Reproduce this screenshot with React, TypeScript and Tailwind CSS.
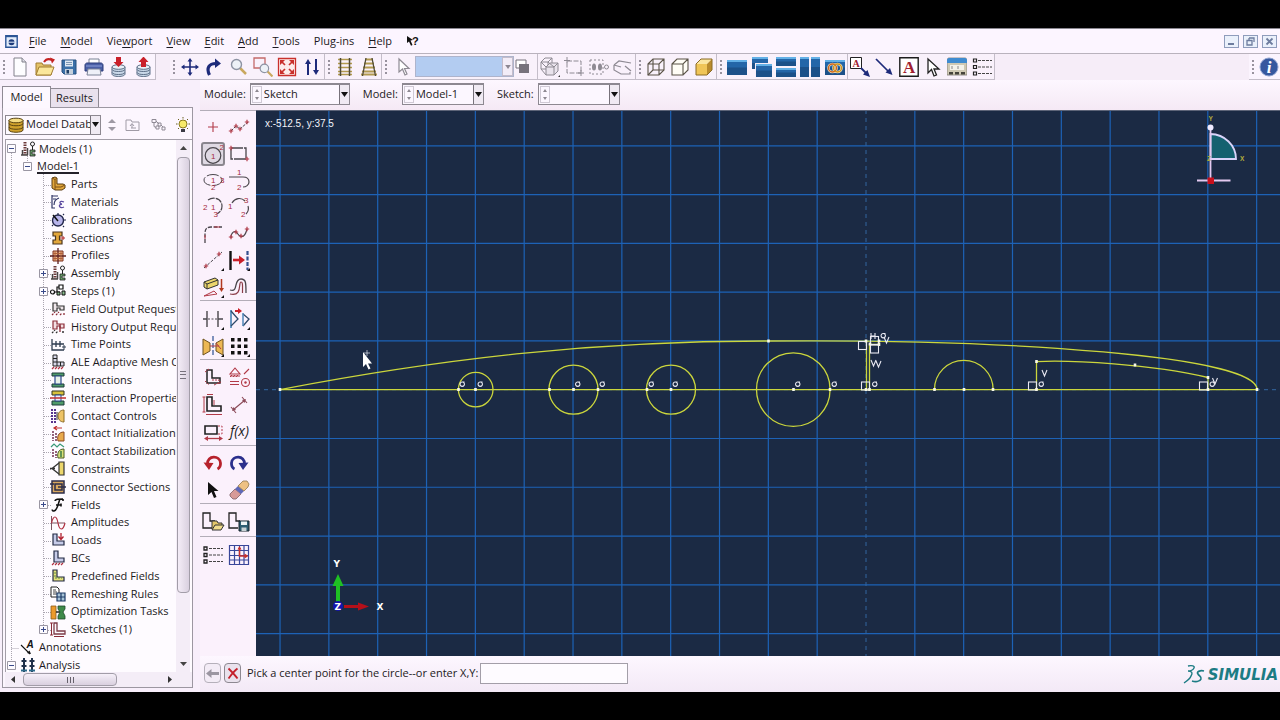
import React from "react";

type Kids = { children?: React.ReactNode };

const RED = "#b23a48";
const NAVY = "#1d2a7a";

function I20({ children }: Kids) {
  return (
    <svg viewBox="0 0 20 20" className="size-5 shrink-0" fill="none" aria-hidden="true">
      {children}
    </svg>
  );
}
function I24({ children }: Kids) {
  return (
    <svg viewBox="0 0 24 24" className="size-6 shrink-0" fill="none" aria-hidden="true">
      {children}
    </svg>
  );
}
function I16({ children }: Kids) {
  return (
    <svg viewBox="0 0 16 16" className="size-4 shrink-0" fill="none" aria-hidden="true">
      {children}
    </svg>
  );
}

/* ---------- main toolbar icons ---------- */

const disk = (
  <>
    <path d="M3 3h14v14H5l-2-2z" fill="#3b6fa8" stroke="#26507f" />
    <path d="M6 3.500h8v6H6z" fill="#dfe8f2" />
    <path d="M7 5.500h6M7 7.500h6" stroke="#7d97b5" />
    <path d="M6 12h8v5H6z" fill="#c5d0dc" />
    <path d="M7.500 13h2.500v3.500H7.500z" fill="#1f3e66" />
  </>
);
const drum = (
  <>
    <path d="M4 10v7c0 1.400 2.700 2.500 6.500 2.500S17 18.400 17 17v-7z" fill="#c9d8e8" stroke="#5d6f87" />
    <path d="M4 12.500c1 1.500 3 2 6.500 2s5.500-.6 6.500-2M4 15.500c1 1.500 3 2 6.500 2s5.500-.6 6.500-2" stroke="#5d6f87" />
    <ellipse cx="10.500" cy="10" rx="6.500" ry="2.300" fill="#eaf1f8" stroke="#5d6f87" />
  </>
);
const glass = (
  <>
    <path d="M11 11l6 6" stroke="#c9a85f" strokeWidth="2.500" />
    <circle cx="7.500" cy="7.500" r="5" fill="#edf1f7" stroke="#8d93a3" strokeWidth="1.400" />
  </>
);
const pane = (x: number, y: number, w: number, h: number) => (
  <>
    <rect x={x} y={y} width={w} height={h} fill="#2466a8" />
    <rect x={x} y={y + h / 2} width={w} height={h / 2} fill="#15406f" opacity="0.55" />
    <rect x={x} y={y} width={w} height="2" fill="#63b0e6" />
  </>
);
const cubeEdges = (
  <path d="M2 7l5-5h11v11l-5 5H2zM2 7h11l5-5M13 7v11" stroke="#5a5347" strokeWidth="1.100" />
);

const fileTools: [string, React.ReactNode][] = [
  ["New", <I20><path d="M4 1h8l4 4v14H4z" fill="#fdfdff" stroke="#82818c" /><path d="M12 1v4h4" fill="#dedee6" stroke="#82818c" /></I20>],
  ["Open", <I20><path d="M1 18V6h6l1 2h8v10z" fill="#e3c168" stroke="#a17c31" /><path d="M1 18l3-8h15l-3 8z" fill="#fbe79c" stroke="#a17c31" /><path d="M9 5c2-3 5-3.500 8-2" stroke="#c42222" strokeWidth="2" /><path d="M15 .5l5 2-3 4z" fill="#c42222" /></I20>],
  ["Save", <I20>{disk}</I20>],
  ["Print", <I20><path d="M5 2h10v5H5z" fill="#fff" stroke="#7b8296" /><path d="M1 8c0-1 1-2 2-2h14c1 0 2 1 2 2v6H1z" fill="#4a5fa6" stroke="#2c3c7a" /><path d="M2 9h16" stroke="#8ea0da" /><path d="M4 12h12l1 6H3z" fill="#eef0f8" stroke="#7b8296" /></I20>],
  ["Import", <I20>{drum}<path d="M8 0h5v5h2.500l-5 5-5-5H8z" fill="#c9202a" /></I20>],
  ["Export", <I20>{drum}<path d="M8 10h5V5h2.500l-5-5.500-5 5.500H8z" fill="#c9202a" /></I20>],
];

const viewTools: [string, React.ReactNode][] = [
  ["Pan", <I20><path d="M10 3v14M3 10h14" stroke={NAVY} strokeWidth="1.600" /><path d="M10 1l2.500 3.500h-5zM10 19l2.500-3.500h-5zM1 10l3.500-2.500v5zM19 10l-3.500-2.500v5z" fill={NAVY} /></I20>],
  ["Rotate", <I20><path d="M5.500 18C2 11 5 6.500 12 6.500" stroke={NAVY} strokeWidth="3.200" /><path d="M11 1.500l6 5-6 4.500z" fill={NAVY} /></I20>],
  ["Zoom", <I20>{glass}</I20>],
  ["Box zoom", <I20><path d="M1 1h11v10H1z" stroke="#c46a6a" strokeWidth="1.300" /><g transform="translate(5 5) scale(.85)">{glass}</g></I20>],
  ["Fit view", <I20><path d="M1.500 1.500h17v17h-17z" fill="#fdeceb" stroke="#c9302c" strokeWidth="1.300" /><path d="M4 4l4 4M16 4l-4 4M4 16l4-4M16 16l-4-4" stroke="#c9302c" strokeWidth="1.700" /><path d="M3 3h5L3 8zM17 3v5l-5-5zM3 17v-5l5 5zM17 17h-5l5-5z" fill="#c9302c" /></I20>],
  ["Cycle views", <I20><path d="M6 5v13M14 2v13" stroke={NAVY} strokeWidth="2" /><path d="M6 2l3 5H3zM14 18l3-5h-6z" fill={NAVY} /></I20>],
];

const projTools: [string, React.ReactNode][] = [
  ["Parallel", <I20><path d="M3 2.500h14M3 6.500h14M3 10.500h14M3 14.500h14M3 17.500h14" stroke="#b29a4e" strokeWidth="1.600" /><path d="M5.500 1v18M14.500 1v18" stroke="#4e4935" strokeWidth="1.500" /></I20>],
  ["Perspective", <I20><path d="M6 2.500h8M5 6.500h10M4 10.500h12M3 14.500h14M2 17.500h16" stroke="#b29a4e" strokeWidth="1.800" /><path d="M7 1L3.500 19M13 1l3.500 18" stroke="#4e4935" strokeWidth="1.300" /></I20>],
];

const GR = "#8e8a93";
const selTools: [string, React.ReactNode][] = [
  ["Select from all entities", <I20><path d="M1 5l4-4h7v7l-4 4H1zM1 5h7l4-4M8 5v7" stroke={GR} /><path d="M6 10l4-4h8v8l-4 4H6z" fill="#e9e3ec" stroke={GR} /><path d="M6 10h8l4-4M14 10v8M1 5l5 5M8 5l6 5M1 12l5 6" stroke={GR} /><path d="M18 20h2v-2z" fill="#333" /></I20>],
  ["Drag shape", <I20><path d="M3 4h14v12H3z" stroke={GR} strokeDasharray="5 1.500" /><path d="M3 0v6M0 3.500h6M17 13v6M14 16h6" stroke={GR} /></I20>],
  ["Selection scope", <I20><path d="M1 3h13v14H1z" stroke={GR} strokeDasharray="2 2" /><ellipse cx="5" cy="10" rx="2" ry="3.500" fill={GR} /><ellipse cx="11" cy="10" rx="2" ry="3.500" fill={GR} /><circle cx="17.500" cy="10" r="2" stroke={GR} /></I20>],
  ["Element edge", <I20><path d="M1 8l5-4 12 2M1 8v5l7 4h9v-2M1 8l7 2M12 9l6 5" stroke={GR} strokeWidth="1.200" /></I20>],
];

const renderTools: [string, React.ReactNode][] = [
  ["Wireframe", <I20>{cubeEdges}<path d="M7 2v11h11M7 13l-5 5" stroke="#5a5347" strokeWidth="1.100" /></I20>],
  ["Hidden", <I20><path d="M2 7l5-5h11v11l-5 5H2z" fill="#fffdf6" />{cubeEdges}</I20>],
  ["Shaded", <I20><path d="M2 7h11v11H2z" fill="#f0c557" /><path d="M2 7l5-5h11l-5 5z" fill="#fbe6a0" /><path d="M13 7l5-5v11l-5 5z" fill="#b98b2c" /><path d="M2 7l5-5h11v11l-5 5H2z" stroke="#8a6a25" /></I20>],
];

const vpTools: [string, React.ReactNode][] = [
  ["Create viewport", <I20>{pane(0, 3, 20, 15)}</I20>],
  ["Cascade", <I20>{pane(0, 0, 16, 12)}<path d="M3 6h17v14H3z" fill="#f6edf8" />{pane(4, 7, 16, 13)}</I20>],
  ["Tile horizontally", <I20>{pane(0, 0, 20, 9)}{pane(0, 11, 20, 9)}</I20>],
  ["Tile vertically", <I20>{pane(0, 0, 9, 20)}{pane(11, 0, 9, 20)}</I20>],
  ["Link viewports", <I20>{pane(0, 3, 20, 15)}<circle cx="7.500" cy="11" r="4" stroke="#f0e3c0" strokeWidth="2.600" /><circle cx="12.500" cy="11" r="4" stroke="#f0e3c0" strokeWidth="2.600" /><circle cx="7.500" cy="11" r="4" stroke="#d0641c" strokeWidth="1.400" /><circle cx="12.500" cy="11" r="4" stroke="#d0941c" strokeWidth="1.400" /></I20>],
];

const noteTools: [string, React.ReactNode][] = [
  ["Text arrow", <I20><path d="M.5.5h11v11H.5z" fill="#fff" stroke="#222" /><text x="2.500" y="9.500" fontSize="10" fontWeight="700" fill="#a02030" fontFamily="Liberation Serif, serif">A</text><path d="M11 11l6 6" stroke={NAVY} strokeWidth="1.800" /><path d="M20 20l-7-2.500 4.500-4.500z" fill={NAVY} /></I20>],
  ["Arrow", <I20><path d="M2 2l12 12" stroke={NAVY} strokeWidth="1.700" /><path d="M18.500 18l-7-2.500 4.500-4.500z" fill={NAVY} /></I20>],
  ["Text", <I20><path d="M.8.8h18.400v18.400H.8z" fill="#fff" stroke="#1c1c1c" strokeWidth="1.400" /><text x="4" y="16" fontSize="17" fontWeight="700" fill="#a02030" fontFamily="Liberation Serif, serif">A</text></I20>],
  ["Select annotation", <I20><path d="M5 2v14l3.500-3.500L11 19l2.500-1-2.500-6h5z" fill="#fff" stroke="#222" strokeWidth="1.300" /></I20>],
  ["Annotation manager", <I20><path d="M0 3c0-1 1-2 2-2h16c1 0 2 1 2 2v15H0z" fill="#cfc9b4" stroke="#7d7c74" strokeWidth=".8" /><path d="M0 3c0-1 1-2 2-2h16c1 0 2 1 2 2v3H0z" fill="#3f8bd0" /><path d="M3 8h14v5H3z" fill="#f4f2ea" /><path d="M5 9v3M11 9v3" stroke="#888" /><path d="M2 15h4v2.500H2zM8 15h4v2.500H8zM14 15h4v2.500h-4z" fill="#45433b" /></I20>],
  ["Options", <I20><path d="M1.500 2h3v3h-3zM1.500 8.500h3v3h-3zM1.500 15h3v3h-3z" stroke="#222" strokeWidth="1.200" /><path d="M6 3.500h14M6 10h14M6 16.500h14" stroke="#444" strokeWidth="1.200" strokeDasharray="3 1" /></I20>],
];

/* ---------- sketch toolbox icons ---------- */

const plus = (x: number, y: number, r = 2.2) => (
  <path d={`M${x - r} ${y}h${2 * r}M${x} ${y - r}v${2 * r}`} stroke={RED} strokeWidth="1.200" />
);
const digit = (x: number, y: number, d: string) => (
  <text x={x} y={y} fontSize="8" fill="#a52a3c" fontFamily="Liberation Sans, sans-serif">{d}</text>
);
const corner = <path d="M23 20v3h-3z" fill="#111" />;
const G = "#4a464c";

type Tool = [string, React.ReactNode];
const box1: Tool[] = [
  ["Isolated point", <I24><path d="M12 7v10M7 12h10" stroke={RED} strokeWidth="1.100" /></I24>],
  ["Connected lines", <I24><path d="M4 16l5-5 4 3 8-7" stroke={G} strokeDasharray="3 1" />{plus(4, 16)}{plus(9, 11)}{plus(13, 14)}{plus(20, 7)}</I24>],
  ["Circle", <I24><circle cx="12" cy="13.500" r="7.800" stroke={G} strokeWidth="1.200" />{digit(10, 16.5, "1")}{digit(18.5, 8, "2")}</I24>],
  ["Rectangle", <I24><path d="M4 6h15v11H4z" stroke={G} strokeWidth="1.300" strokeDasharray="12 1" />{plus(4, 6)}{plus(20, 17)}</I24>],
  ["Ellipse", <I24><ellipse cx="12" cy="12" rx="9" ry="5.500" stroke={G} strokeDasharray="12 2" />{digit(10, 14.5, "1")}{digit(10, 21.5, "2")}{digit(19, 14.5, "3")}</I24>],
  ["Tangent arc", <I24><path d="M2 9h14c4 0 6 2 6 5s-3 5-6 5" stroke={G} strokeWidth="1.200" />{digit(10, 7, "1")}{digit(10, 22, "2")}</I24>],
  ["Center arc", <I24><path d="M7 5c6-4 14-1 14 6 0 4-2 6-5 8" stroke={G} strokeWidth="1.200" strokeDasharray="7 1" />{digit(2, 15, "2")}{digit(10, 15, "1")}{digit(12.5, 22, "3")}</I24>],
  ["Three point arc", <I24><path d="M5 8c3-5 9-6 13-2M21 11c1 3 0 6-2 8" stroke={G} strokeWidth="1.200" />{digit(1, 14, "1")}{digit(17, 8, "3")}{digit(14, 22, "2")}</I24>],
  ["Fillet", <I24><path d="M4 21V11c0-4 2-6 6-6h11" stroke={G} strokeWidth="1.300" strokeDasharray="4 1.500" /><path d="M13 5h6M4 13v4" stroke={RED} /></I24>],
  ["Spline", <I24><path d="M4 16c0-6 4-8 6-5s7 8 10-4" stroke={G} strokeWidth="1.200" />{plus(4, 15)}{plus(9, 10)}{plus(14, 14)}{plus(20, 7)}</I24>],
  ["Construction line", <I24><path d="M3 20L21 4" stroke={G} strokeDasharray="3 1.500" />{plus(5, 18)}{plus(18, 6)}{corner}</I24>],
  ["Project edges", <I24><path d="M3.500 3v19" stroke="#111" strokeWidth="2.400" /><path d="M6 12h7" stroke="#c9202a" strokeWidth="2.600" /><path d="M12 7.500l6 4.500-6 4.500z" fill="#c9202a" /><path d="M20.500 3v19" stroke="#35508f" strokeWidth="2.200" strokeDasharray="4 1.500" />{corner}</I24>],
  ["Offset", <I24><path d="M3 7l11-4 3 2v5L6 14l-3-2z" fill="#ecd66c" stroke="#333" /><path d="M3 7l3 2 11-4M6 9v5" stroke="#333" /><path d="M3 21l10-5 3 3z" stroke={RED} /><path d="M20.500 4v10" stroke="#b23a20" strokeWidth="1.500" /><path d="M18 13h5l-2.500 4z" fill="#b23a20" />{corner}</I24>],
  ["Offset curves", <I24><path d="M3 15c9 3 3-11 11-11 5 0 5 4 5 14" stroke={G} strokeWidth="1.300" /><path d="M3 19c13 3 8-12 11-12 2 0 1.500 4 1.500 11" stroke="#8b3c48" strokeWidth="1.200" /></I24>],
];
const box2: Tool[] = [
  ["Trim", <I24><path d="M6 4v16M17 4v16M2 12h4M17 12h5" stroke={G} strokeWidth="1.400" /><path d="M7 12h10" stroke={G} strokeDasharray="2 1.500" />{corner}</I24>],
  ["Extend", <I24><path d="M4 3v18" stroke="#4f86b8" strokeWidth="1.700" /><path d="M4 4l7 8-7 7M16 7l6 5-6 7" stroke="#2f4a6a" strokeWidth="1.300" /><path d="M16 6v13" stroke="#4f86b8" strokeWidth="1.500" /><path d="M8 4h4" stroke="#c9202a" strokeWidth="2" /><path d="M11 1l4 3-4 3z" fill="#c9202a" />{corner}</I24>],
  ["Mirror", <I24><path d="M2 5l7 4v8l-7 4zM22 5l-7 4v8l7 4z" fill="#edb854" stroke="#6d5220" /><path d="M12 2v20" stroke="#3a5c9a" strokeWidth="1.300" strokeDasharray="5 2" /><path d="M9 12h9M15 9l5 6" stroke={RED} />{corner}</I24>],
  ["Pattern", <I24><path d="M4 4h3.500v3.500H4zM10.500 4H14v3.500h-3.500zM17 4h3.500v3.500H17zM4 10.500h3.500V14H4zM10.500 10.500H14V14h-3.500zM17 10.500h3.500V14H17zM4 17h3.500v3.500H4zM10.500 17H14v3.500h-3.500zM17 17h3.500v3.500H17z" fill="#111" />{corner}</I24>],
];
const box3: Tool[] = [
  ["Auto-constrain", <I24><path d="M6 4h5v8h8v5H6z" stroke="#222" strokeWidth="1.500" /><path d="M11 14h7v5M4 6l4-3M13 19l7-3M4 15l4 4" stroke={RED} strokeDasharray="2 1" /></I24>],
  ["Add constraint", <I24><path d="M8 2l5 6H3zM3 10h10M3 15.500h9M3 18.500h9M17 8l5-5" stroke={RED} strokeWidth="1.100" /><path d="M3 11l2-2M6 11l2-2M9 11l2-2" stroke={RED} /><circle cx="18.500" cy="16.500" r="4" stroke={RED} strokeWidth="1.100" /><circle cx="18.500" cy="16.500" r="1.200" fill={RED} /></I24>],
  ["Auto-dimension", <I24><path d="M6 4h5v9h9v5H6z" stroke="#222" strokeWidth="1.600" /><path d="M3 4v15M5 21.500h16M6 1.500h6M13 7v5M1.500 4h3M1.500 19h3" stroke={RED} /></I24>],
  ["Add dimension", <I24><path d="M6 17L18 7M4 14l5 6M15 4l5 6" stroke="#8b4a58" strokeWidth="1.100" /><path d="M5 18l4-1-2.500-3zM19 6l-4 1 2.500 3z" fill="#8b4a58" /></I24>],
  ["Edit dimension", <I24><path d="M4 6h12v8H4z" stroke="#222" strokeWidth="1.600" /><path d="M17 6h4v8h-4" stroke={RED} strokeDasharray="2 1.500" /><path d="M6 18.500h13" stroke={RED} strokeWidth="1.300" /><path d="M3 18.500l4-2.500v5zM22 18.500L18 16v5z" fill={RED} /></I24>],
  ["Parameter manager", <I24><text x="12.500" y="16" textAnchor="middle" fontSize="14" fontStyle="italic" fill="#1c1c1c" fontFamily="Open Sans, sans-serif">f(x)</text></I24>],
];
const box4: Tool[] = [
  ["Undo", <I24><path d="M6.500 13C6 4 19 4 19.500 12c.2 3-1 5-3 6" stroke="#b7222c" strokeWidth="2.800" /><path d="M2.500 11.500l10 .5-4.500 7z" fill="#b7222c" /></I24>],
  ["Redo", <I24><path d="M17.500 13C18 4 5 4 4.500 12c-.2 3 1 5 3 6" stroke="#2b2f8c" strokeWidth="2.800" /><path d="M21.500 11.500l-10 .5 4.500 7z" fill="#2b2f8c" /></I24>],
  ["Select", <I24><path d="M7 4v13l3.500-3 2.500 6 2.500-1-2.500-6h4.500z" fill="#111" /></I24>],
  ["Delete", <I24><path d="M3 16l5-5 6 5-5 5H6l-3-3z" fill="#d79a98" stroke="#7d5f66" strokeWidth=".8" /><path d="M8 11l3-3 6 5-3 3z" fill="#5f68b8" /><path d="M11 8l5-5h4l2 3-1 3-4 4z" fill="#eec184" stroke="#8f7a50" strokeWidth=".8" /></I24>],
];
const box5: Tool[] = [
  ["Add sketch", <I24><path d="M11 18H2V3h7v8h5" stroke="#222" strokeWidth="1.300" /><path d="M11 19v-8h5l1 2h4v2" fill="#e3c76a" stroke="#333" /><path d="M11 20l3-5h9l-3 5z" fill="#f0dc8c" stroke="#333" /></I24>],
  ["Save sketch", <I24><path d="M11 18H2V3h7v8h4" stroke="#222" strokeWidth="1.300" /><path d="M12 11h10v10H12z" fill="#2c5d72" stroke="#16242b" /><path d="M14 11.500h6V15h-6z" fill="#eef4f6" /><path d="M14.500 17.500h5V21h-5z" fill="#c9d3d6" /></I24>],
];
const box6: Tool[] = [
  ["Sketcher options", <I24><path d="M3 4h3v3H3zM3 10.500h3v3H3zM3 17h3v3H3z" stroke="#222" strokeWidth="1.300" /><path d="M8 5.500h14M8 12h14M8 18.500h14" stroke="#444" strokeDasharray="3 1" /></I24>],
  ["Customize grid", <I24><path d="M2.500 2.500h19v19h-19zM7.500 2.500v19M12.500 2.500v19M17 2.500v19M2.500 7.500h19M2.500 12.500h19M2.500 17h19" stroke="#39479a" strokeWidth="1.200" /><path d="M12.500 5v8H19" stroke="#c9302c" strokeWidth="1.500" /><path d="M10.500 6.500h4l-2-3.500zM17.500 10.500v5l4-2.500z" fill="#c9302c" /></I24>],
];

/* ---------- tree icons ---------- */

const towers = (
  <I16>
    <path d="M5 1v13" stroke="#6d3a3a" strokeWidth="3" strokeDasharray="1.500 1" />
    <path d="M1 14h7M2.500 9v5M7.500 7v7" stroke="#4a4444" strokeWidth="1.500" />
    <circle cx="12.500" cy="3" r="2" stroke="#222" />
    <path d="M12.500 5v4" stroke="#222" />
    <path d="M10 9h5v2h-3v2h3v2h-5z" fill="#6aa06a" stroke="#222" strokeWidth=".8" />
  </I16>
);
const lShape = (fill: string) => <path d="M3 2h4v7h7v4H3z" fill={fill} stroke="#222a44" strokeWidth="1.200" />;

const ti = {
  models: towers,
  parts: <I16><path d="M2 2l3-1 2 1v6h6l2 1v3l-3 2H5l-3-2z" fill="#e2a73c" stroke="#5b3c10" /><path d="M5 3.500V11h6l3-1.500M5 11v3M2 2l3 1.500 2-1.500" stroke="#7a4e14" /></I16>,
  materials: <I16><path d="M2 1v13h3M2 2h6M4 11C4 7 6 5 9 4" stroke="#2f3566" strokeWidth="1.200" /><path d="M3 5h3" stroke="#2f3566" /><path d="M14 8c-5-2-5 2-2 2-5 1-2 5 2 3" stroke="#5b4aa0" strokeWidth="1.300" /></I16>,
  calibrations: <I16><circle cx="8" cy="8.500" r="5.500" fill="#b7b4ea" stroke="#22264a" strokeWidth="1.400" /><path d="M8 9L3 3" stroke="#111" strokeWidth="1.500" /><path d="M8 1v2M14 8h2M13 3l1-1M2 14l1-1M13 14l1 1" stroke="#22264a" strokeWidth="1.200" /></I16>,
  sections: <I16><path d="M3 2h9v4H9.500v4H12v4H3v-4h2.500V6H3z" fill="#e2a73c" stroke="#4a3520" strokeWidth="1.200" /><path d="M10 8h5M13 6v4" stroke="#b02020" /></I16>,
  profiles: <I16><path d="M3 3h10v10H3z" fill="#f0b789" stroke="#7d3020" /><path d="M8 0v16M0 8h16" stroke="#5d2020" strokeWidth="1.300" /><path d="M5 3v10M11 3v10M3 5.500h10M3 10.500h10" stroke="#b0603c" /></I16>,
  steps: <I16><circle cx="2.500" cy="9" r="2" stroke="#111" strokeWidth="1.200" /><path d="M4.500 9H7V4h3M7 9h3" stroke="#111" strokeWidth="1.200" /><path d="M9 2h4v4H9z" fill="#fff" stroke="#111" strokeWidth="1.200" /><path d="M7 9h3v3H7zM12 8h3v4h-3z" fill="#86b98a" stroke="#111" /></I16>,
  fieldOut: <I16><path d="M3 2h4v3h7v4h-4V7H7v3H3z" fill="#efe6ea" stroke="#333" strokeWidth="1.200" /><path d="M2 14l3-3M6 14l3-3M10 14l2-2M14 12v2" stroke="#8b2c38" strokeWidth="1.300" strokeDasharray="2 1" /></I16>,
  histOut: <I16><path d="M3 2h4v3h7v4h-4V7H7v3H3z" fill="#f3dfe3" stroke="#8b2c38" strokeWidth="1.200" /><path d="M10 5v8" stroke="#8b2c38" strokeWidth="1.300" /><path d="M2 14l3-3M6 14l2-2M12 13h3" stroke="#333" strokeWidth="1.300" strokeDasharray="2 1" /></I16>,
  time: <I16><path d="M2 2v11h12M2 7h12M6 4v6M10 4v6" stroke="#2f3c50" strokeWidth="1.300" /><path d="M14 8v5M12 10h4" stroke="#2f3c50" /></I16>,
  ale: <I16><path d="M3 1h4v7h7v4H3zM3 4.500h4M3 8h4v4M10.500 8v4" fill="#d8d8e8" stroke="#222" /><path d="M2 15l2-2M5 15l2-2M8 15l2-2M11 15l2-2" stroke="#b03040" strokeWidth="1.200" /></I16>,
  interactions: <I16><path d="M2 1h12v3H2zM2 12h12v3H2z" fill="#4f9a6a" stroke="#1e3a3a" /><path d="M5 4h6v8H5z" fill="#e8f2e8" stroke="#28468a" strokeWidth="1.200" /></I16>,
  intProps: <I16><path d="M2 1h12v4H2z" fill="#d8c13c" stroke="#33331e" /><path d="M2 11h12v4H2z" fill="#4f9a6a" stroke="#1e3a3a" /><path d="M5 5h6v6H5z" fill="#eef" stroke="#28468a" /><path d="M0 8h16" stroke="#c03030" strokeWidth="1.500" /></I16>,
  ctrl: <I16><path d="M2 1v14M5 1v14" stroke="#57358f" strokeWidth="2" strokeDasharray="2 1" /><path d="M14 2c-8 0-8 12 0 12z" fill="#eec367" stroke="#8a6a25" /><path d="M7 4v8" stroke="#333" /></I16>,
  init: <I16><path d="M3 5v10M6 7v8" stroke="#7a3c5a" strokeWidth="1.600" strokeDasharray="2 1" /><path d="M14 6c-6 0-7 5-6 9h6z" fill="#e8a94c" stroke="#8a4a25" /><path d="M4 2h8M7 0L4 2l3 2" stroke="#c03030" strokeWidth="1.200" /></I16>,
  stab: <I16><path d="M3 6v9M6 8v7" stroke="#7a3c5a" strokeWidth="1.600" strokeDasharray="2 1" /><path d="M14 6c-6 0-7 5-6 9h6z" fill="#d9e27a" stroke="#4a5a25" /><path d="M1 4l3-3 3 3 3-3 4 3" stroke="#3a9a78" strokeWidth="1.200" /><path d="M11 8v6" stroke="#3a7a48" strokeWidth="1.500" /></I16>,
  constraints: <I16><path d="M9 1h5v13H9z" fill="#ecd66c" stroke="#333" strokeWidth="1.200" /><path d="M9 2L2 7.500 9 13M0 7.500h5" stroke="#333" strokeWidth="1.300" /></I16>,
  connector: <I16><path d="M2 2h12v12H2z" fill="#d9a860" stroke="#2c2c4a" strokeWidth="1.500" /><path d="M5 5h7v6H5zM8 8h8M0 5h4" stroke="#2c2c4a" strokeWidth="1.500" /></I16>,
  fields: <I16><path d="M5 4c0-2 3-2 8-2M10 2C8 6 8 13 4 14c-1 .2-2-.5-1.500-1.500M6 8h5M11 6.500v3M13 2v2" stroke="#111" strokeWidth="1.600" /></I16>,
  amp: <I16><path d="M1.500 1v14M1 8h14" stroke="#7d5560" /><path d="M1.500 8c2-8 5-8 6.500 0s5 8 7 0" stroke="#b03040" strokeWidth="1.200" /></I16>,
  loads: <I16>{lShape("#c6cbe8")}<path d="M11 1v6M8.500 4.500L11 7.500l2.500-3" stroke="#b02030" strokeWidth="1.300" /></I16>,
  bcs: <I16><path d="M4 1h4v7h6v4H4z" fill="#c6cbe8" stroke="#222a44" strokeWidth="1.200" /><path d="M2 15l2-2M5 15l2-2M8 15l2-2M11 15l2-2" stroke="#b03040" strokeWidth="1.200" /></I16>,
  predef: <I16>{lShape("#e5e07a")}<path d="M5 4v6h7" stroke="#5a8a4a" strokeDasharray="2 1" /></I16>,
  remesh: <I16><path d="M1 1h6l2 2v8H1z" fill="#fff" stroke="#222" /><path d="M3 4h3M3 6h4M3 8h4" stroke="#444" /><path d="M7 7h8v8H7zM11 7v8M7 11h8" fill="#a9c4d8" stroke="#1d3a66" strokeWidth="1.200" /></I16>,
  opt: <I16><path d="M1 2h5v13H1z" fill="#ec9a2c" stroke="#8a5a18" strokeWidth=".8" /><path d="M6 8h4" stroke="#222" strokeWidth="1.500" /><path d="M8 2h7v3l-2 3 2 4v3H8v-3l2-4-2-3z" fill="#3f8a4a" stroke="#1e4a28" strokeWidth=".8" /></I16>,
  sketches: <I16><path d="M4 2h3v8h8v3H4z" stroke="#7d3c48" strokeWidth="1.300" /><path d="M1.500 2v12M0 2h3M0 14h3M4 15.500h10" stroke="#8b2c38" /></I16>,
  annotations: <I16><path d="M1 6l9 9" stroke="#111" strokeWidth="1.100" /><path d="M11 15l-4-1 2.500-2.500z" fill="#111" /><text x="6.500" y="9" fontSize="10" fontWeight="700" fontStyle="italic" fill="#111" fontFamily="Liberation Sans, sans-serif">A</text></I16>,
  analysis: <I16><path d="M4 1v14M12 1v14M1.500 4h5M9.500 4h5M1.500 9h5M9.500 9h5" stroke="#20304a" strokeWidth="2" /><path d="M1 13.500h6M9 13.500h6" stroke="#2c6a8a" strokeWidth="2" /></I16>,
};

type Row = { level: 1 | 2; label: string; icon: React.ReactNode; exp?: "+" | "-" };
const rowsTop: Row = { level: 1, label: "Models (1)", icon: ti.models, exp: "-" };
const rows: Row[] = [
  { level: 2, label: "Parts", icon: ti.parts },
  { level: 2, label: "Materials", icon: ti.materials },
  { level: 2, label: "Calibrations", icon: ti.calibrations },
  { level: 2, label: "Sections", icon: ti.sections },
  { level: 2, label: "Profiles", icon: ti.profiles },
  { level: 2, label: "Assembly", icon: ti.models, exp: "+" },
  { level: 2, label: "Steps (1)", icon: ti.steps, exp: "+" },
  { level: 2, label: "Field Output Requests", icon: ti.fieldOut },
  { level: 2, label: "History Output Requests", icon: ti.histOut },
  { level: 2, label: "Time Points", icon: ti.time },
  { level: 2, label: "ALE Adaptive Mesh Constraints", icon: ti.ale },
  { level: 2, label: "Interactions", icon: ti.interactions },
  { level: 2, label: "Interaction Properties", icon: ti.intProps },
  { level: 2, label: "Contact Controls", icon: ti.ctrl },
  { level: 2, label: "Contact Initializations", icon: ti.init },
  { level: 2, label: "Contact Stabilizations", icon: ti.stab },
  { level: 2, label: "Constraints", icon: ti.constraints },
  { level: 2, label: "Connector Sections", icon: ti.connector },
  { level: 2, label: "Fields", icon: ti.fields, exp: "+" },
  { level: 2, label: "Amplitudes", icon: ti.amp },
  { level: 2, label: "Loads", icon: ti.loads },
  { level: 2, label: "BCs", icon: ti.bcs },
  { level: 2, label: "Predefined Fields", icon: ti.predef },
  { level: 2, label: "Remeshing Rules", icon: ti.remesh },
  { level: 2, label: "Optimization Tasks", icon: ti.opt },
  { level: 2, label: "Sketches (1)", icon: ti.sketches, exp: "+" },
  { level: 1, label: "Annotations", icon: ti.annotations },
  { level: 1, label: "Analysis", icon: ti.analysis, exp: "-" },
];

function Expander({ kind, name }: { kind?: "+" | "-"; name: string }) {
  if (!kind) return <span className="w-[11px] shrink-0" />;
  return (
    <button aria-label={`Toggle ${name}`} className="flex w-[11px] shrink-0 items-center justify-center">
      <svg viewBox="0 0 9 9" className="size-[9px]" fill="none">
        <path d="M.5.5h8v8h-8z" fill="#fdfbff" stroke="#9a96a3" />
        <path d={kind === "+" ? "M2 4.500h5M4.500 2v5" : "M2 4.500h5"} stroke="#3a4a8a" />
      </svg>
    </button>
  );
}

function TreeRow({ row }: { row: Row }) {
  if (row.level === 1)
    return (
      <li className="flex items-center whitespace-nowrap">
        <Expander kind={row.exp} name={row.label} />
        <span className="ml-[3px]">{row.icon}</span>
        <span className="ml-[3px]">{row.label}</span>
      </li>
    );
  return (
    <li className="flex items-center whitespace-nowrap pl-8">
      <Expander kind={row.exp} name={row.label} />
      <span className="ml-px">{row.icon}</span>
      <span className="ml-[5px]">{row.label}</span>
    </li>
  );
}

/* ---------- toolbar pieces ---------- */

function Grip() {
  return (
    <span className="flex w-2 shrink-0 items-center justify-center">
      <span className="h-3.5 w-0 border-l-2 border-dotted border-[#98929e]" />
    </span>
  );
}

function Buttons({ tools, className }: { tools: Tool[]; className: string }) {
  return (
    <span className={`flex shrink-0 ${className}`}>
      {tools.map(([label, icon]) => (
        <button key={label} aria-label={label} className="flex min-w-0 flex-1 items-center justify-center">
          {icon}
        </button>
      ))}
    </span>
  );
}

function Toolbox({ tools, className, active }: { tools: Tool[]; className: string; active?: string }) {
  return (
    <div className={`grid auto-rows-fr grid-cols-[26px_26px] border-t border-[#b3adb8] ${className}`}>
      {tools.map(([label, icon]) => (
        <button
          key={label}
          aria-label={label}
          className={
            label === active
              ? "m-px flex min-h-0 items-center justify-center rounded-[3px] border-2 border-[#8a868e] bg-[#dfd9e3]"
              : "flex min-h-0 items-center justify-center"
          }
        >
          {icon}
        </button>
      ))}
    </div>
  );
}

function Drop() {
  return (
    <span className="pointer-events-none flex w-[10px] shrink-0 items-center justify-center border-l border-[#77727b] bg-[#f0eaf3]">
      <svg viewBox="0 0 7 5" className="h-[5px] w-[7px]"><path d="M0 0h7L3.500 5z" fill="#111" /></svg>
    </span>
  );
}

function Combo({ id, label, value, width }: { id: string; label: string; value: string; width: string }) {
  return (
    <div className="flex items-center gap-1">
      <label htmlFor={id}>{label}</label>
      <div className={`flex h-[22px] items-stretch border border-t-2 border-[#8d8891] bg-[#fcf7ff] ${width}`}>
        <span className="my-px ml-px flex w-2.5 shrink-0 flex-col items-center justify-around border border-[#cfc9d4]">
          <svg viewBox="0 0 6 4" className="h-1 w-1.5"><path d="M3 0l2 3H1z" fill="#8d8891" /></svg>
          <svg viewBox="0 0 6 4" className="h-1 w-1.5"><path d="M3 4l2-3H1z" fill="#8d8891" /></svg>
        </span>
        <select id={id} defaultValue={value} className="min-w-0 flex-1 appearance-none bg-transparent pl-0.5 outline-none">
          <option>{value}</option>
        </select>
        <Drop />
      </div>
    </div>
  );
}

/* ---------- sketch canvas ---------- */

const xs = [-12, -11, -10, -9, -8, -7, -6, -5, -4, -3, -2, -1, 1, 2, 3, 4, 5, 6, 7, 8, 9, 10, 11, 12].map((k) => 866 + k * 48.83);
const ys = [-5, -4, -3, -2, -1, 1, 2, 3, 4, 5, 6, 7].map((k) => 389.7 + k * 48.78);
const points: [number, number][] = [
  [280, 389.5], [458.5, 389.5], [475.5, 389.5], [549.5, 389.5], [573.5, 389.5], [598, 389.5],
  [647, 389.5], [671, 389.5], [768.5, 341], [793.5, 389.5], [830, 389.5], [866, 341], [870, 344],
  [879, 341], [879, 344.5], [866, 389.5], [869.5, 389.5], [934.5, 389.5], [964, 389.5], [993, 389.5],
  [1036.5, 361.5], [1036.5, 389.5], [1135, 365], [1208, 377.5], [1208, 389.5], [1257, 389.5],
];
const coins: [number, number][] = [
  [462, 384.5], [480, 384.5], [577.5, 384.5], [602, 384.5], [651, 384.5], [675, 384.5], [797.5, 384.5],
  [834, 384.5], [874.5, 384.5], [883, 336], [1041, 384.5], [1212, 384.5],
];
const squares: [number, number][] = [[858.5, 341.5], [870.5, 336.5], [870.5, 345], [861.5, 382], [1028.5, 382], [1199.5, 382]];
const vees: [number, number][] = [[871, 360], [876, 361], [884, 337], [1042, 370], [1212.5, 378]];

function Canvas() {
  return (
    <div className="relative min-w-0 flex-1 overflow-hidden border-t border-[#5d6478] bg-[#1b2a44]">
      <svg className="absolute inset-0 size-full" fill="none" role="img" aria-label="Wing profile sketch">
        <g transform="translate(-256 -111)">
          <g stroke="#1d62b6" strokeWidth="1.200">
            {xs.map((x) => <path key={x} d={`M${x} 0V1400`} />)}
            {ys.map((y) => <path key={y} d={`M0 ${y}H2600`} />)}
          </g>
          <path d="M866 110V1400M256 389.700H2600" stroke="#33659f" strokeDasharray="4 4" />
          <g stroke="#cbd63c" strokeWidth="1.300">
            <path d="M280 389.600C450 357 600 341 768 341C1010 339 1257 356 1257 389.600" />
            <path d="M280 389.600H1257" />
            <circle cx="475.700" cy="389.600" r="17.300" />
            <circle cx="573.500" cy="389.600" r="24.500" />
            <circle cx="671" cy="389.600" r="24.500" />
            <circle cx="793.300" cy="389.600" r="36.800" />
            <path d="M934.500 389.600a29.300 29.300 0 0 1 58.600 0" />
            <path d="M866.500 341v48.600M869.500 344v45.600M870 344.500h9V341" />
            <path d="M1036.500 389.600v-28C1072 360 1150 364 1208 377.500v12" />
          </g>
          <g stroke="#e9e9f2" strokeWidth="1.100">
            {squares.map(([x, y]) => <rect key={`${x}-${y}`} x={x} y={y} width="8" height="8" />)}
            {coins.map(([x, y]) => <path key={`${x}-${y}`} d={`M${x + 2.5} ${y - 2.5}h-2.500a2.200 2.200 0 1 0 .5 0`} />)}
            {vees.map(([x, y]) => <path key={`${x}-${y}`} d={`M${x} ${y}l2.500 6 2.500-6`} />)}
            <path d="M871 333v6M875 333v6M871 336h4" />
          </g>
          <g fill="#f7f7e8">
            {points.map(([x, y]) => <rect key={`${x}-${y}`} x={x - 1.3} y={y - 1.5} width="2.600" height="3" />)}
          </g>

          <path d="M1210.500 134a26 25 0 0 1 25.500 25h-25.500z" fill="#146170" stroke="#d9d3fa" strokeWidth="1.800" />
          <path d="M1210.500 128v53M1197 180.500h33.500" stroke="#e3c9f0" strokeWidth="1.800" />
          <circle cx="1210.500" cy="127.500" r="3" fill="#efeaff" />
          <rect x="1207.500" y="177.500" width="6.500" height="6.500" fill="#c9101c" />
          <g fontSize="6.500" fontFamily="Liberation Sans, sans-serif" fontWeight="700" fill="#b3ad3c">
            <text x="1208.500" y="121">Y</text>
            <text x="1240" y="161">X</text>
            <text x="1207" y="161">Z</text>
          </g>

          <path d="M338 602v-18" stroke="#1fc023" strokeWidth="4" />
          <path d="M338 574l5.500 12h-11z" fill="#1fc023" />
          <path d="M344 606.500h16" stroke="#b5101a" strokeWidth="3" />
          <path d="M369 606.500l-11-4v8z" fill="#b5101a" />
          <circle cx="338" cy="606" r="5" fill="#1414b0" />
          <g fontSize="9" fontWeight="700" fill="#fff" fontFamily="DejaVu Sans, sans-serif">
            <text x="333.500" y="567">Y</text>
            <text x="376.500" y="610">X</text>
            <text x="334.500" y="609.500">Z</text>
          </g>
          <path d="M363 352v15l3-3 2.500 5.500 2-1-2.500-5h4z" fill="#fff" />
          <path d="M364 353h6M367 350v6" stroke="#dfe3ee" strokeWidth=".7" />
        </g>
      </svg>
      <p className="relative pt-[7px] pl-[9px] font-['Liberation_Sans',sans-serif] text-[10px] leading-3 text-[#f2f2f8]">x:-512.5, y:37.5</p>
    </div>
  );
}

const menus: [string, string, string][] = [
  ["", "F", "ile"], ["", "M", "odel"], ["Vie", "w", "port"], ["", "V", "iew"], ["", "E", "dit"],
  ["", "A", "dd"], ["", "T", "ools"], ["Plu", "g", "-ins"], ["", "H", "elp"],
];

const winBtn = "flex h-[13px] w-[15px] items-center justify-center border border-[#8f9cbc] bg-[#eaf0fb]";

export default function App() {
  return (
    <div className="flex h-screen flex-col bg-black py-7 font-['Open_Sans','Noto_Sans',sans-serif] text-[11px] text-[#1c1a22]">
      <div className="flex min-h-0 flex-1 flex-col overflow-hidden border-t border-[#8a8790] bg-[#f8effb]">
        {/* menu bar */}
        <header className="flex h-6 shrink-0 items-center bg-[#fcf5ff] pr-[3px] pl-[5px]">
          <svg viewBox="0 0 13 13" className="size-[13px]" fill="none" aria-hidden="true">
            <path d="M.8.8h11.400v11.400H.8z" fill="#e3ecfa" stroke="#2c5597" strokeWidth="1.400" />
            <path d="M.8 1.500h11.400" stroke="#2c5597" strokeWidth="1.400" />
            <circle cx="6.500" cy="7.200" r="3" fill="#1e3c7c" />
            <path d="M2 7.200h9" stroke="#e3ecfa" />
          </svg>
          <nav className="ml-[11px] flex gap-3.5">
            {menus.map(([a, u, b]) => (
              <button key={a + u + b}>
                {a}<span className="underline underline-offset-2">{u}</span>{b}
              </button>
            ))}
            <button aria-label="What's this?">
              <svg viewBox="0 0 13 12" className="h-3 w-[13px]">
                <path d="M1 1l6 4-2.500.6L6.500 10l-1.500.7L3 6.500 1 8z" fill="#111" />
                <text x="6" y="10" fontSize="11" fontWeight="700" fill="#111" fontFamily="Liberation Sans, sans-serif">?</text>
              </svg>
            </button>
          </nav>
          <div className="ml-auto flex gap-1">
            <button aria-label="Minimize" className={winBtn}><svg viewBox="0 0 9 9" className="size-[9px]"><path d="M1 6h6v2H1z" fill="#6d7c9e" /></svg></button>
            <button aria-label="Restore" className={winBtn}><svg viewBox="0 0 9 9" className="size-[9px]" fill="none"><path d="M3 1h5v4M3 1v2M1 3.500h5V8H1z" stroke="#6d7c9e" strokeWidth="1.300" /></svg></button>
            <button aria-label="Close" className={winBtn}><svg viewBox="0 0 9 9" className="size-[9px]"><path d="M1.500 1.500l6 6M7.500 1.500l-6 6" stroke="#6d7c9e" strokeWidth="1.800" /></svg></button>
          </div>
        </header>

        {/* toolbars */}
        <div className="flex h-[27px] shrink-0 items-stretch border-t border-[#b9b2bd] bg-[#f6edf8]">
          <div className="flex border-r border-b border-[#c4bdc9] bg-[#fbf4fe]">
            <Grip />
            <Buttons tools={fileTools} className="w-[147px]" />
          </div>
          <div className="ml-3.5 flex border-b border-[#c4bdc9] bg-[#f9f1fb]">
            <Grip />
            <Buttons tools={viewTools} className="w-[147px] border-r border-[#c4bdc9]" />
            <Grip />
            <Buttons tools={projTools} className="w-[49px] border-r border-[#c4bdc9]" />
            <Grip />
            <button aria-label="Select" className="flex w-[25px] items-center justify-center">
              <I20><path d="M6 2v13l3.500-3 2.500 6 2-1-2.500-5.500H16z" fill="#fff" stroke={GR} strokeWidth="1.200" /></I20>
            </button>
            <span className="my-0.5 flex w-[99px] border border-[#aeb4cc] bg-[#b3ccf1]">
              <select aria-label="Selection filter" className="min-w-0 flex-1 appearance-none bg-transparent"><option> </option></select>
              <span className="pointer-events-none flex w-[11px] items-center justify-center border border-[#c3bccb] bg-[#f2ecf7]">
                <svg viewBox="0 0 7 5" className="h-1 w-1.5"><path d="M0 0h7L3.500 5z" fill="#8b8692" /></svg>
              </span>
            </span>
            <button aria-label="Highlight options" className="flex w-6 items-center justify-start border-r border-[#c4bdc9]">
              <I20><path d="M2 3h10v8H2z" fill="#fff" stroke="#77737c" /><path d="M5 7h10v9H5z" fill="#77737c" /></I20>
            </button>
            <Buttons tools={selTools} className="w-[98px] border-r border-[#c4bdc9]" />
            <Grip />
            <Buttons tools={renderTools} className="w-[73px] border-r border-[#c4bdc9]" />
            <Grip />
            <Buttons tools={vpTools} className="w-[123px] border-r border-[#c4bdc9]" />
            <Buttons tools={noteTools} className="w-[147px] border-r border-[#c4bdc9]" />
          </div>
          <div className="ml-auto flex border-b border-[#c4bdc9] bg-[#fbf4fe]">
            <Grip />
            <button aria-label="Information" className="flex w-[23px] items-center justify-center">
              <I20>
                <circle cx="10" cy="10" r="9" fill="#36589f" stroke="#8ea2cf" />
                <text x="10" y="15.500" textAnchor="middle" fontSize="17" fontWeight="700" fontStyle="italic" fill="#fff" fontFamily="Liberation Serif, serif">i</text>
              </I20>
            </button>
          </div>
        </div>

        <div className="flex min-h-0 flex-1">
          {/* model tree */}
          <aside className="flex w-[193px] shrink-0 flex-col pt-1.5 pb-1 pl-0.5">
            <div role="tablist" className="relative z-10 flex shrink-0 items-end">
              <button role="tab" aria-selected="true" className="-mb-px h-[22px] w-[49px] border border-b-0 border-[#8f8a94] bg-[#fdf8ff]">Model</button>
              <button role="tab" aria-selected="false" className="h-[19px] w-12 border border-b-0 border-l-0 border-[#8f8a94] bg-[#e9e1ed]">Results</button>
            </div>
            <div className="flex min-h-0 flex-1 flex-col border border-[#9c97a1] bg-[#fcf6fe] pl-0.5">
              <div className="flex h-[31px] shrink-0 items-center pt-0.5">
                <div className="flex h-5 w-24 shrink-0 items-stretch border border-[#8d8891] bg-[#fdf9ff]">
                  <svg viewBox="0 0 18 16" className="ml-px h-4 w-[18px] self-center" fill="none" aria-hidden="true">
                    <path d="M2 3v10c0 3 14 3 14 0V3z" fill="#d0a12c" />
                    <path d="M2 3v10c0 3 14 3 14 0V3M2 6.500c0 3 14 3 14 0M2 10c0 3 14 3 14 0" stroke="#5a4412" />
                    <ellipse cx="9" cy="3.500" rx="7" ry="2.300" fill="#f6dd83" stroke="#5a4412" />
                  </svg>
                  <select aria-label="Tree source" className="min-w-0 flex-1 appearance-none overflow-hidden bg-transparent pl-px outline-none">
                    <option>Model Database</option>
                  </select>
                  <Drop />
                </div>
                <button aria-label="Previous or next item" className="ml-1.5">
                  <svg viewBox="0 0 10 16" className="h-4 w-2.5"><path d="M5 2l4 4H1zM5 14l4-4H1z" fill="#9e99a4" /></svg>
                </button>
                <button aria-label="Up one level" className="ml-2">
                  <svg viewBox="0 0 16 14" className="h-3.5 w-4" fill="none"><path d="M1 12.500V2h5l1 2h7v8.500zM6 10h5M7 10V6M5 8l2-2.500L9 8" stroke="#a09ba6" /></svg>
                </button>
                <button aria-label="Dependencies" className="ml-2.5">
                  <svg viewBox="0 0 16 14" className="h-3.5 w-4" fill="none"><path d="M1 1.500h4v3H1zM3 4.500v4l2 1M5 3l3 3M7 5h3v3H7zM11 9h3v3h-3zM5 8h3v3H5zM10 7l2 2" stroke="#8f8a95" /></svg>
                </button>
                <button aria-label="Tips" className="ml-2">
                  <svg viewBox="0 0 16 16" className="size-4" fill="none"><circle cx="8" cy="7" r="4" fill="#f7ea6a" stroke="#8a7a20" /><path d="M6 12h4v3H6z" fill="#3a3a44" /><path d="M8 0v1.500M1 7h1.500M13.500 7H15M3 2l1 1M13 2l-1 1M3 12l1-1M13 12l-1-1" stroke="#6a6020" /></svg>
                </button>
              </div>
              <div className="flex min-h-0 flex-1 border-t border-l border-[#a39ea8] bg-[#fefbff]">
                <div className="relative min-w-0 flex-1 overflow-hidden">
                  <svg className="absolute inset-0 size-full" fill="none" stroke="#aaa5b0" strokeDasharray="1 1" aria-hidden="true">
                    <path d="M5.500 9v517M5.500 508.500H13M37.500 30v461" />
                    <path d="M21.500 12v10" />
                    {rows.slice(0, 26).map((r, i) => (
                      <path key={r.label} d={`M38 ${Math.round(44.5 + i * 17.8)}.5h7`} />
                    ))}
                  </svg>
                  <ul className="relative grid h-[534px] auto-rows-fr">
                    <TreeRow row={rowsTop} />
                    <li className="flex items-center whitespace-nowrap pl-4">
                      <Expander kind="-" name="Model-1" />
                      <span className="ml-1 border-b-2 border-[#24222a] leading-[13px]">Model-1</span>
                    </li>
                    {rows.map((r) => <TreeRow key={r.label} row={r} />)}
                  </ul>
                </div>
                <div className="mr-0.5 flex w-3.5 shrink-0 flex-col items-center bg-[#f4edf7] py-1.5">
                  <svg viewBox="0 0 7 4" className="h-1 w-[7px]"><path d="M3.500 0L7 4H0z" fill="#444" /></svg>
                  <div className="mt-[7px] flex w-[13px] flex-[434] items-center justify-center rounded-sm border border-[#a29da8] bg-gradient-to-r from-[#f4edf7] to-[#d9d0df]">
                    <span className="h-2 w-1.5 border-y border-[#77727d]"><span className="mt-0.5 block h-0 border-t border-[#77727d]" /></span>
                  </div>
                  <div className="flex-[69]" />
                  <svg viewBox="0 0 7 4" className="h-1 w-[7px]"><path d="M3.500 4L0 0h7z" fill="#444" /></svg>
                </div>
              </div>
              <div className="flex h-[15px] shrink-0 items-center bg-[#f4edf7] pr-5 pl-1.5">
                <svg viewBox="0 0 4 7" className="h-[7px] w-1"><path d="M0 3.500L4 0v7z" fill="#333" /></svg>
                <div className="ml-2 flex h-[13px] w-[94px] items-center justify-center rounded-sm border border-[#a29da8] bg-gradient-to-b from-[#f6f0f9] to-[#d9d0df]">
                  <span className="h-1.5 w-[7px] border-x border-[#66616c]"><span className="ml-0.5 block h-full w-0 border-l border-[#66616c]" /></span>
                </div>
                <svg viewBox="0 0 4 7" className="ml-auto h-[7px] w-1"><path d="M4 3.500L0 0v7z" fill="#333" /></svg>
              </div>
            </div>
          </aside>

          <main className="ml-[7px] flex min-w-0 flex-1 flex-col">
            {/* context bar */}
            <div className="flex h-[30px] shrink-0 items-center gap-[13px] bg-gradient-to-b from-[#fdf7ff] to-[#f5e9f5] pb-0.5 pl-1">
              <Combo id="module" label="Module:" value="Sketch" width="w-[100px]" />
              <Combo id="model" label="Model:" value="Model-1" width="w-[82px]" />
              <Combo id="sketch" label="Sketch:" value="" width="w-[82px]" />
            </div>

            <div className="flex min-h-0 flex-1">
              <div className="w-14 shrink-0 overflow-hidden bg-[#fbf1fc]">
                <Toolbox tools={box1} active="Circle" className="h-[190px] pt-[3px]" />
                <Toolbox tools={box2} className="h-[59px] pt-[5px]" />
                <Toolbox tools={box3} className="h-[86px] pt-[5px]" />
                <Toolbox tools={box4} className="h-[58px] pt-[4px]" />
                <Toolbox tools={box5} className="h-[33px] pt-[4px]" />
                <Toolbox tools={box6} className="h-[33px] pt-[4px]" />
              </div>
              <Canvas />
            </div>

            {/* prompt area */}
            <footer className="flex h-9 shrink-0 items-center bg-gradient-to-b from-[#fdf7ff] to-[#f3e9f6] pb-0.5 pl-1">
              <button aria-label="Previous step" className="flex h-5 w-[17px] items-center justify-center rounded-sm border border-[#b5b0ba] bg-[#f3ecf6]">
                <svg viewBox="0 0 13 11" className="h-[11px] w-[13px]"><path d="M0 5.500L5.500 1v3H13v3H5.500v3z" fill="#9b96a1" /></svg>
              </button>
              <button aria-label="Cancel" className="ml-[3px] flex h-5 w-[17px] items-center justify-center rounded-sm border border-[#8d8891] bg-[#e9e2ed]">
                <svg viewBox="0 0 12 13" className="h-[13px] w-3"><path d="M1.500 1.500c3 3 6 6 9 10M10.500 1.500c-4 3-6 6-9 10" stroke="#c4202c" strokeWidth="1.800" fill="none" /></svg>
              </button>
              <label htmlFor="coords" className="ml-1.5 whitespace-nowrap">Pick a center point for the circle--or enter X,Y:</label>
              <input id="coords" className="ml-0.5 h-[21px] w-[148px] border border-[#a39ea8] bg-[#fefbff] px-1 outline-none" />
              <div className="ml-auto flex items-center gap-px pt-1">
                <svg viewBox="0 0 24 22" className="h-[22px] w-6" fill="none" stroke="#1c7c84" aria-hidden="true">
                  <path d="M5 2c4-1 7 0 6 2-1 2-4 3-6 3 4 0 5 2 3 5-1 3-4 5-7 7" strokeWidth="1.400" />
                  <path d="M21 7c-4-1-8 1-6 3 1 2 4 3 3 5-1 3-6 3-9 2" strokeWidth="1.700" />
                </svg>
                <span className="whitespace-nowrap pr-0.5 font-['DejaVu_Sans',sans-serif] text-[15px] font-bold italic leading-5 text-[#1c7c84]">SIMULIA</span>
              </div>
            </footer>
          </main>
        </div>
      </div>
    </div>
  );
}
